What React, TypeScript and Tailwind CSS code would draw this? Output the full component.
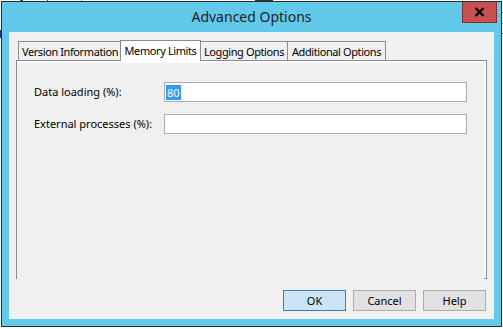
import React from 'react';

const tabs = [
  { label: 'Version Information', w: 'w-[104px]' },
  { label: 'Memory Limits', w: 'w-[81px]', active: true },
  { label: 'Logging Options', w: 'w-[88px]' },
  { label: 'Additional Options', w: 'w-[99px]' },
];

const font = { fontFamily: '"Noto Sans", "Open Sans", sans-serif' };

export default function App() {
  return (
    <div className="w-[503px] h-[329px] bg-white overflow-hidden relative" style={font}>
      {/* bits of the desktop behind the dialog */}
      <div className="absolute left-[20px] top-0 w-[3px] h-px bg-[#444]" />
      <div className="absolute left-[47px] top-0 w-px h-px bg-[#1c3f9a]" />
      <div className="absolute left-[81px] top-0 w-px h-px bg-[#c08a3a]" />
      <div className="absolute left-[255px] top-0 w-[18px] h-px bg-[#333]" />
      <div className="absolute left-0 top-[30px] w-px h-[8px] bg-[#2a2f8a]" />
      <div className="absolute right-0 top-[12px] w-[2px] h-px bg-[#555]" />
      <div className="absolute right-0 top-[23px] w-[2px] h-px bg-[#555]" />
      <div className="absolute right-0 top-[33px] w-[2px] h-px bg-[#555]" />

      <div className="ml-px mt-px w-[501px] h-[326px] border border-[#2c2c2c] bg-[#63c9ea] flex flex-col">
        {/* title bar */}
        <div className="h-[30px] shrink-0 relative flex items-center justify-center">
          <span className="text-[14px] text-[#1e1e1e] leading-none -mt-[1px] whitespace-nowrap">Advanced Options</span>
          <div className="absolute right-[4px] top-0 w-[35px] h-[21px] bg-[#c75050] border border-[#7e3030] border-t-0 flex items-center justify-center">
            <svg width="11" height="10" viewBox="0 0 11 10">
              <path d="M1.5 1 L9.5 9 M9.5 1 L1.5 9" stroke="#000" strokeWidth="2.4" />
            </svg>
          </div>
        </div>

        {/* client area */}
        <div className="mx-[7px] mb-[7px] flex-1 bg-[#f0f0f0] flex flex-col px-[7px] pt-[8px]">
          {/* tab strip */}
          <div className="flex items-end h-[20px] pl-[2px] relative z-10">
            {tabs.map((t) =>
              t.active ? (
                <div
                  key={t.label}
                  className={`${t.w} h-[21px] -mb-px -mx-px bg-white border border-[#898c95] border-b-0 text-[11px] tracking-[-0.4px] text-[#000] flex justify-center pt-[2px] leading-[15px] whitespace-nowrap relative z-10`}
                >
                  {t.label}
                </div>
              ) : (
                <div
                  key={t.label}
                  className={`${t.w} h-[19px] bg-[#f0f0f0] border border-[#898c95] border-b-0 -mr-px text-[11px] tracking-[-0.4px] text-[#000] flex justify-center pt-[2px] leading-[15px] whitespace-nowrap`}
                >
                  {t.label}
                </div>
              )
            )}
          </div>

          {/* tab panel */}
          <div className="w-[471px] h-[219px] border border-[#898c95] bg-white">
            <div className="h-full ml-0 mt-[2px] mr-[2px] bg-[#f0f0f0] pt-[19px] pl-[17px] flex flex-col gap-[12px]">
              <div className="flex items-center h-[20px]">
                <span className="w-[130px] text-[11px] text-[#000] whitespace-nowrap">Data loading (%):</span>
                <div className="w-[303px] h-[20px] bg-white border border-[#abadb3] flex items-center pl-[1px]">
                  <span className="bg-[#3399ff] text-white text-[11px] leading-[15px] px-px">80</span>
                </div>
              </div>
              <div className="flex items-center h-[20px]">
                <span className="w-[130px] text-[11px] text-[#000] whitespace-nowrap">External processes (%):</span>
                <div className="w-[303px] h-[20px] bg-white border border-[#abadb3]" />
              </div>
            </div>
          </div>

          {/* buttons */}
          <div className="flex justify-end gap-[7px] mt-[11px] pr-[1px]">
            <button className="w-[63px] h-[21px] bg-[#cce4f7] border border-[#3c7fb1] text-[11px] text-[#000] leading-none">
              OK
            </button>
            <button className="w-[63px] h-[21px] bg-[#e1e1e1] border border-[#adadad] text-[11px] text-[#000] leading-none">
              Cancel
            </button>
            <button className="w-[63px] h-[21px] bg-[#e1e1e1] border border-[#adadad] text-[11px] text-[#000] leading-none">
              Help
            </button>
          </div>
        </div>
      </div>
    </div>
  );
}
